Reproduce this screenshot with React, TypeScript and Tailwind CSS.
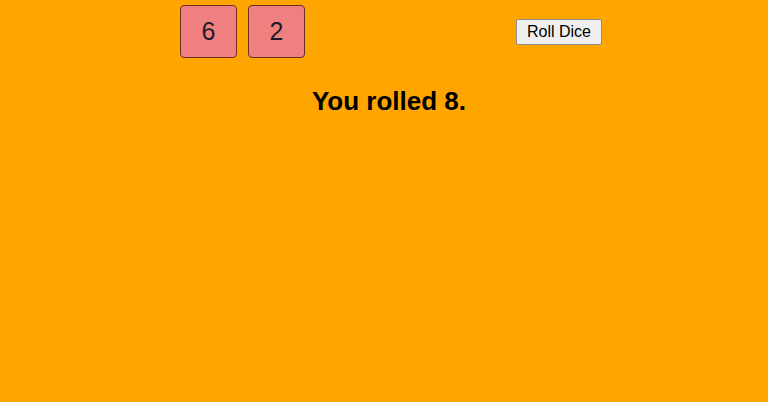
export default function App() {
  const dice=[6,2]
  const total=dice.reduce((a,b)=>a+b,0)
  return (
    <div className="min-h-[402px] w-full bg-[#ffa500] font-['Liberation_Sans',Arial,sans-serif] text-black">
      <div className="flex items-center pt-[5px]">
        <div className="ml-[180px] flex gap-[11px]">
          {dice.map((d,i)=>(
            <div key={i} className="flex h-[53px] w-[57px] items-center justify-center rounded-[4px] border border-[#6b2e22] bg-[#f08080] text-[25px] text-[#1c1c2a]">{d}</div>
          ))}
        </div>
        <button className="ml-[211px] h-[26px] rounded-[2px] border border-[#8f8f8f] bg-[#efefef] px-[10px] text-[16px] text-black">Roll Dice</button>
      </div>
      <h2 className="mt-[24px] pl-[10px] text-center text-[26px] font-bold">You rolled {total}.</h2>
    </div>
  )
}
